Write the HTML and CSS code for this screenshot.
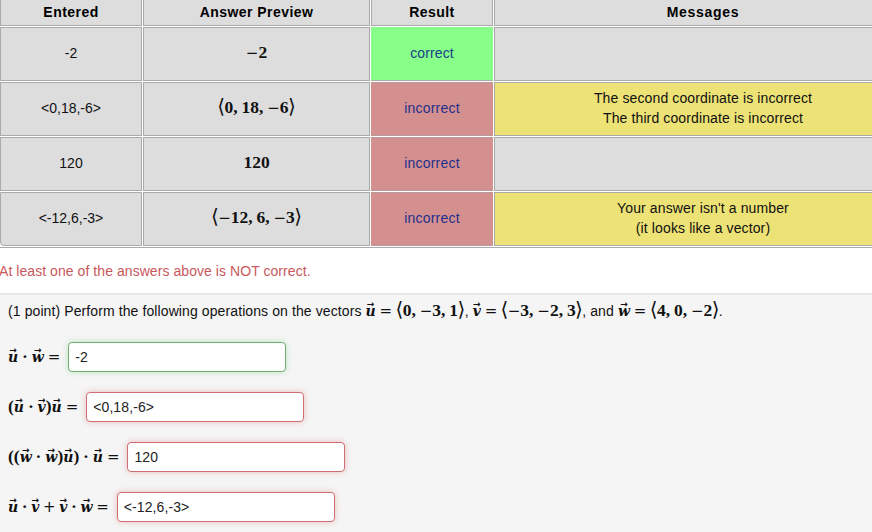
FILE: index.html
```html
<!DOCTYPE html>
<html lang="en">
<head>
<meta charset="utf-8">
<title>Attempt results</title>
<link rel="stylesheet" href="styles.css">
</head>
<body>
<div class="results-wrap">
<table class="results">
<colgroup><col class="c1"><col class="c2"><col class="c3"><col class="c4"></colgroup>
<thead><tr><th>Entered</th><th>Answer Preview</th><th>Result</th><th class="wide">Messages</th></tr></thead>
<tbody>
<tr><td>-2</td><td class="preview"><span class="math"><span class="op">−</span>2</span></td><td class="ok">correct</td><td></td></tr>
<tr><td>&lt;0,18,-6&gt;</td><td class="preview"><span class="math"><span class="ang">⟨</span>0, 18, <span class="op">−</span>6<span class="ang">⟩</span></span></td><td class="bad">incorrect</td><td class="msg">The second coordinate is incorrect<br>The third coordinate is incorrect</td></tr>
<tr><td>120</td><td class="preview"><span class="math">120</span></td><td class="bad">incorrect</td><td></td></tr>
<tr><td>&lt;-12,6,-3&gt;</td><td class="preview"><span class="math"><span class="ang">⟨</span><span class="op">−</span>12, 6, <span class="op">−</span>3<span class="ang">⟩</span></span></td><td class="bad">incorrect</td><td class="msg">Your answer isn't a number<br>(it looks like a vector)</td></tr>
</tbody>
</table>
</div>
<p class="notice">At least one of the answers above is NOT correct.</p>
<section class="problem">
<p class="statement">(1 point) Perform the following operations on the vectors <span class="math"><i class="vec">u</i> <span class="op">=</span> <span class="ang">⟨</span>0, <span class="op">−</span>3, 1<span class="ang">⟩</span></span>, <span class="math"><i class="vec">v</i> <span class="op">=</span> <span class="ang">⟨</span><span class="op">−</span>3, <span class="op">−</span>2, 3<span class="ang">⟩</span></span>, and <span class="math"><i class="vec">w</i> <span class="op">=</span> <span class="ang">⟨</span>4, 0, <span class="op">−</span>2<span class="ang">⟩</span></span>.</p>
<div class="answer"><span class="math"><i class="vec">u</i> · <i class="vec">w</i> <span class="op">=</span></span><input class="field good" type="text" value="-2"></div>
<div class="answer"><span class="math">(<i class="vec">u</i> · <i class="vec">v</i>)<i class="vec">u</i> <span class="op">=</span></span><input class="field wrong" type="text" value="<0,18,-6>"></div>
<div class="answer"><span class="math">((<i class="vec">w</i> · <i class="vec">w</i>)<i class="vec">u</i>) · <i class="vec">u</i> <span class="op">=</span></span><input class="field wrong" type="text" value="120"></div>
<div class="answer"><span class="math tight"><i class="vec">u</i> · <i class="vec">v</i> <span class="op">+</span> <i class="vec">v</i> · <i class="vec">w</i> <span class="op">=</span></span><input class="field wrong" type="text" value="<-12,6,-3>"></div>
</section>
</body>
</html>
```
FILE: styles.css
```css
html, body { margin: 0; padding: 0; background: #fff; }
body { width: 872px; height: 532px; overflow: hidden; font-family: "Liberation Sans", Arial, sans-serif; font-size: 14px; line-height: 20px; color: #111; }
.results-wrap { overflow: hidden; width: 872px; height: 248px; }
.results { margin-left: -2px; width: 915px; table-layout: fixed; border-collapse: separate; border-spacing: 1px; border-bottom: 1px solid #aaa; border-left: 1px solid #aaa; border-top: 0; text-align: center; margin-top: -1px; }
.c1 { width: 142px; }
.c2 { width: 227px; }
.c3 { width: 122px; }
.c4 { width: 418px; }
.results th, .results td { background: #ddd; border: 1px solid #aaa; padding: 0; }
.results th { height: 24px; border-top: 0; padding-bottom: 1px; color: #000; font-weight: bold; font-size: 14px; letter-spacing: .45px; }
.results th.wide { letter-spacing: .7px; }
.results td { height: 50px; padding-bottom: 2px; font-size: 14px; }
.results tbody tr:last-child td:first-child { border-bottom-left-radius: 4px; }
.results td.ok { background: #8f8; color: #1a3c8c; border-color: #8f8 #8f8 #aaa; letter-spacing: .12px; }
.results td.bad { background: #d48f8f; color: #1f2f8c; border-color: #b79a9a #d48f8f #b79a9a; letter-spacing: .2px; }
.results td.msg { background: #ede275; color: #111; letter-spacing: .12px; }
.math { font-family: "Liberation Serif", "DejaVu Serif", serif; font-weight: bold; font-size: 17.5px; line-height: 0; color: #111; white-space: nowrap; letter-spacing: 0; word-spacing: -.5px; }
.math.tight { word-spacing: -.75px; }
.ang { font-family: "DejaVu Sans", sans-serif; font-weight: normal; font-size: 20px; margin: 0 -.6px; }
.op { font-family: "DejaVu Sans", sans-serif; font-weight: normal; font-size: 15px; }
.vec { position: relative; display: inline-block; font-family: "DejaVu Serif", serif; font-size: 14px; line-height: 16px; font-weight: bold; font-style: italic; }
.vec::before { content: "→"; position: absolute; left: 50%; top: -7px; transform: translateX(-50%); font-family: "DejaVu Sans", sans-serif; font-size: 9px; line-height: 16px; font-style: normal; font-weight: bold; }
.notice { margin: 13px 0 0 -1px; height: 32px; color: #c9585d; font-size: 14px; line-height: 20px; letter-spacing: .06px; }
.problem { box-sizing: border-box; height: 240px; background: #f5f5f5; border-top: 2px solid #e8e8e8; border-bottom: 1px solid #e3e3e3; padding: 6px 8px 0; }
.statement { margin: 0 0 21px; height: 20px; line-height: 20px; white-space: nowrap; letter-spacing: .1px; }
.answer { display: flex; align-items: center; gap: 8px; height: 30px; margin-bottom: 20px; }
.field { box-sizing: border-box; width: 218px; height: 30px; padding: 4px 6px; background: #fff; border: 1px solid #ccc; border-radius: 4px; font-family: "Liberation Sans", Arial, sans-serif; font-size: 14px; letter-spacing: .1px; color: #222; }
.field.good { border-color: #6fae74; box-shadow: 0 0 6px #bfe0bf; }
.field.wrong { border-color: #cf6f74; box-shadow: 0 0 6px #e9bcbc; }
```
